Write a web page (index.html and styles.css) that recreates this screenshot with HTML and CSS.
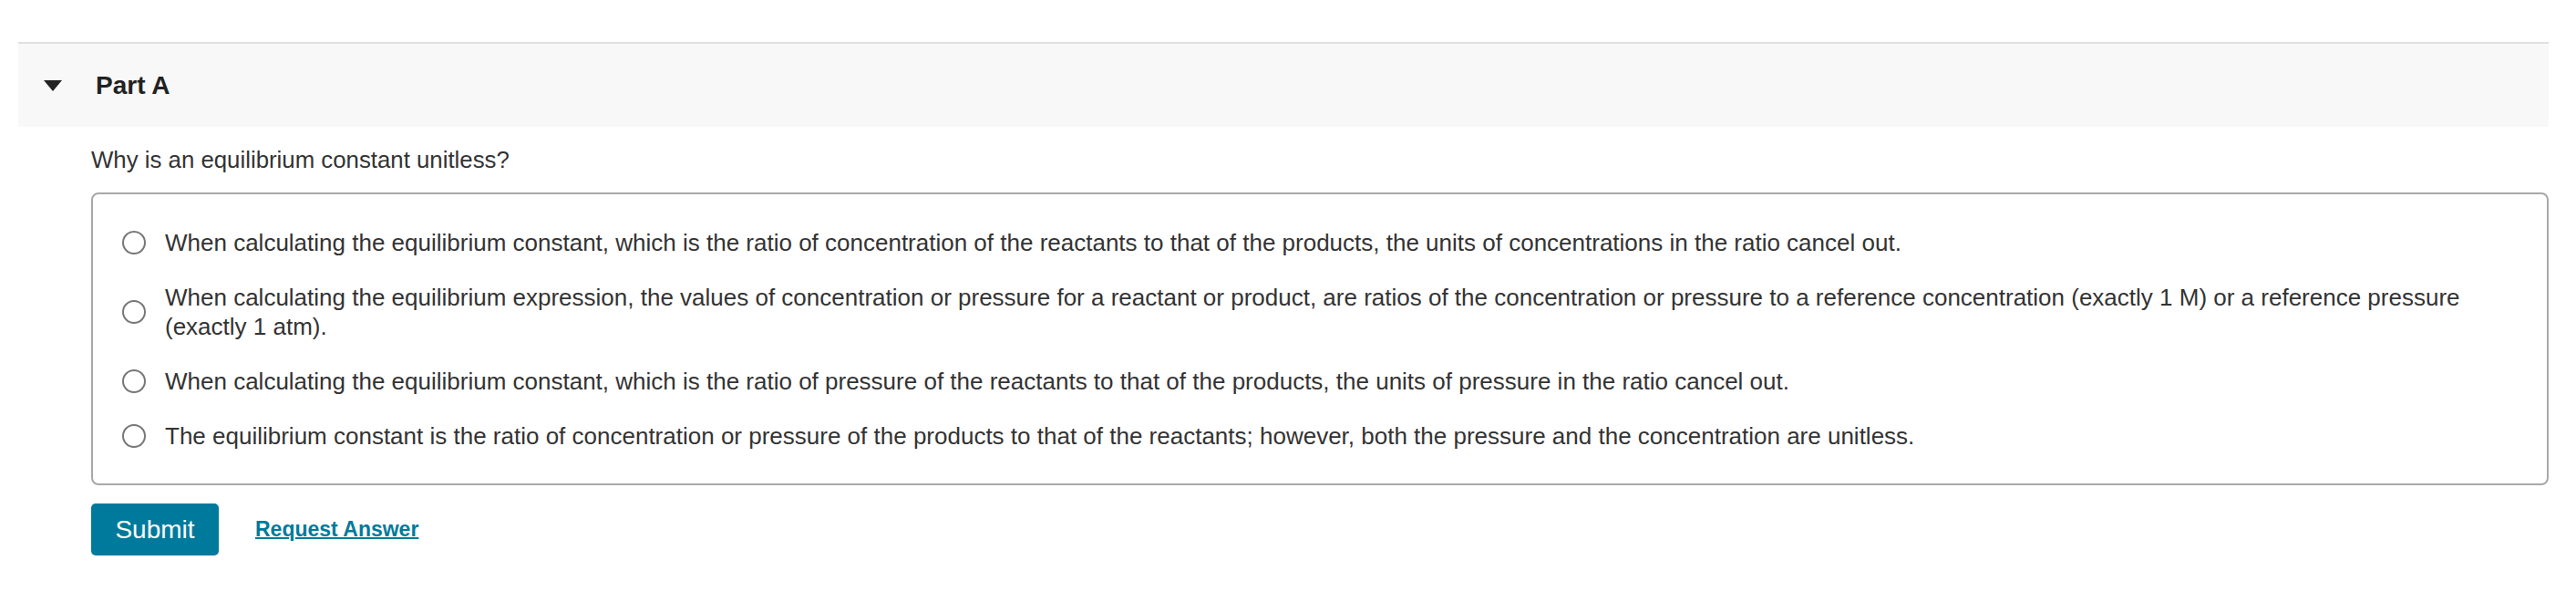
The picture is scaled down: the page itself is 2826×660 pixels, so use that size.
FILE: index.html
```html
<!DOCTYPE html>
<html lang="en">

<head>
  <meta charset="UTF-8" />
  <title>Part A</title>
  <link rel="stylesheet" href="styles.css">
</head>

<body>

  <div class="part">
    <div class="part-header">
      <span class="caret"></span>
      <h2>Part A</h2>
    </div>

    <div class="part-body">
      <p class="question">Why is an equilibrium constant unitless?</p>

      <div class="choices">
        <label class="choice">
          <input type="radio" name="answer" />
          <span>When calculating the equilibrium constant, which is the ratio of concentration of the reactants to that of the products, the units of concentrations in the ratio cancel out.</span>
        </label>
        <label class="choice">
          <input type="radio" name="answer" />
          <span>When calculating the equilibrium expression, the values of concentration or pressure for a reactant or product, are ratios of the concentration or pressure to a reference concentration (exactly 1 M) or a reference pressure (exactly 1 atm).</span>
        </label>
        <label class="choice">
          <input type="radio" name="answer" />
          <span>When calculating the equilibrium constant, which is the ratio of pressure of the reactants to that of the products, the units of pressure in the ratio cancel out.</span>
        </label>
        <label class="choice">
          <input type="radio" name="answer" />
          <span>The equilibrium constant is the ratio of concentration or pressure of the products to that of the reactants; however, both the pressure and the concentration are unitless.</span>
        </label>
      </div>

      <div class="actions">
        <button class="submit-btn">Submit</button>
        <a href="#" class="request-link">Request Answer</a>
      </div>
    </div>
  </div>

</body>

</html>
```

FILE: styles.css
```css
body {
  font-family: "Liberation Sans", Arial, sans-serif;
  background: white;
  color: #333;
  margin: 0;
  padding: 46px 30px 0 20px;
}

.part-header {
  display: flex;
  align-items: center;
  height: 91px;
  background: #f8f8f8;
  border-top: 2px solid #e0e0e0;
}

.caret {
  width: 0;
  height: 0;
  margin-left: 28px;
  border-left: 10.5px solid transparent;
  border-right: 10.5px solid transparent;
  border-top: 12px solid #222;
}

.part-header h2 {
  margin: 0 0 0 37px;
  font-size: 28px;
  font-weight: bold;
  color: #222;
}

.part-body {
  padding-left: 80px;
}

.question {
  margin: 20px 0 0;
  font-size: 25.8px;
  line-height: 32px;
}

.choices {
  margin-top: 20px;
  border: 2px solid #a8a8a8;
  border-radius: 8px;
  padding: 37px 40px 36px 32px;
  display: flex;
  flex-direction: column;
  gap: 28px;
}

.choice {
  display: flex;
  align-items: center;
  font-size: 26px;
  line-height: 32px;
  cursor: pointer;
}

.choice input {
  appearance: none;
  flex: none;
  width: 26px;
  height: 26px;
  margin: 0 21px 0 0;
  border: 2px solid #777;
  border-radius: 50%;
  background: white;
  box-sizing: border-box;
}

.actions {
  display: flex;
  align-items: center;
  margin-top: 20px;
}

.submit-btn {
  cursor: pointer;
  background: #007a9c;
  color: white;
  border: none;
  border-radius: 5px;
  width: 140px;
  height: 57px;
  font-family: inherit;
  font-size: 28px;
}

.request-link {
  margin-left: 40px;
  color: #007a9c;
  font-size: 23px;
  font-weight: bold;
  text-decoration-thickness: 2px;
}
```
